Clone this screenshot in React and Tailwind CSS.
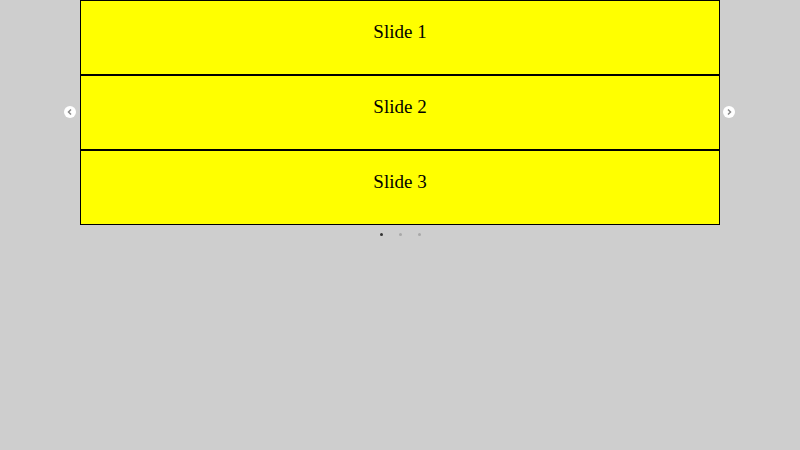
import React from "react";

function Arrow({ dir }) {
  return (
    <div className="w-[12px] h-[12px] rounded-full bg-white flex items-center justify-center">
      <svg width="8" height="8" viewBox="0 0 8 8">
        {dir === "left" ? (
          <path d="M5 1.5 L2.5 4 L5 6.5" fill="none" stroke="#8a8a8a" strokeWidth="1.5" />
        ) : (
          <path d="M3 1.5 L5.5 4 L3 6.5" fill="none" stroke="#8a8a8a" strokeWidth="1.5" />
        )}
      </svg>
    </div>
  );
}

export default function App() {
  const slides = ["Slide 1", "Slide 2", "Slide 3"];
  return (
    <div className="w-[800px] h-[450px] bg-[#cecece]" style={{ fontFamily: '"Liberation Serif", serif' }}>
      <div className="flex justify-center">
        <div className="relative w-[640px]">
          <div className="flex flex-col">
            {slides.map((s) => (
              <div key={s} className="h-[75px] border border-black bg-[#ffff00] flex justify-center pt-[20px]">
                <span className="text-[19px] leading-[22px] text-black">{s}</span>
              </div>
            ))}
          </div>
          <div className="absolute left-[-16px] top-[106px]">
            <Arrow dir="left" />
          </div>
          <div className="absolute right-[-15px] top-[106px]">
            <Arrow dir="right" />
          </div>
          <div className="flex justify-center gap-[16px] mt-[8px]">
            <div className="w-[3px] h-[3px] rounded-full bg-[#333333]" />
            <div className="w-[3px] h-[3px] rounded-full bg-[#a8a8a8]" />
            <div className="w-[3px] h-[3px] rounded-full bg-[#a8a8a8]" />
          </div>
        </div>
      </div>
    </div>
  );
}
